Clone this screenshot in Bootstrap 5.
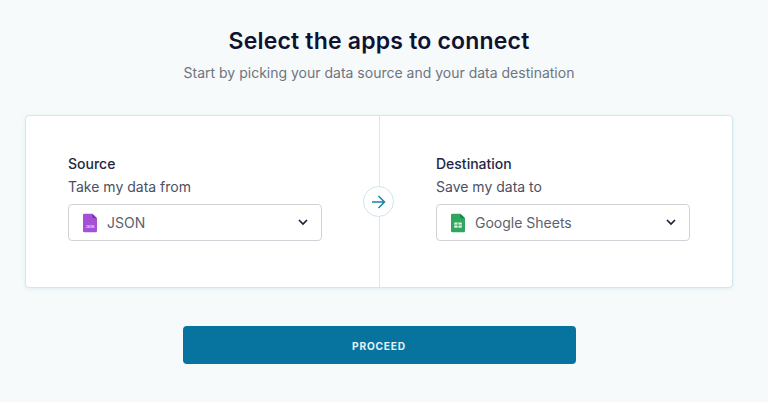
<!DOCTYPE html>
<html lang="en">
<head>
  <meta charset="UTF-8" />
  <title>Select the apps to connect</title>
  <meta name="viewport" content="width=device-width, initial-scale=1.0">
  <link href="https://cdn.jsdelivr.net/npm/bootstrap@5.3.0/dist/css/bootstrap.min.css" rel="stylesheet" />
  <style>
    html, body { height: 100%; overflow: hidden; }
    body {
      background-color: #f6fafb;
      font-family: "Inter", "Liberation Sans", sans-serif;
      color: #1c2238;
    }
    .page-wrap { padding: 27px 35px 0 25px; }
    .page-title {
      font-family: "Inter", sans-serif;
      font-size: 23px;
      font-weight: 600;
      line-height: 28px;
      color: #0f1230;
      margin: 0 0 8px;
      text-align: center;
      letter-spacing: .2px;
    }
    .page-sub {
      font-size: 14px;
      line-height: 20px;
      color: #6f747f;
      margin: 0 0 32px;
      text-align: center;
    }
    .connect-box {
      background: #fff;
      border: 1px solid #d3e7ee;
      border-radius: 4px;
      height: 173px;
      box-shadow: 0 1px 4px rgba(120, 170, 190, .15);
    }
    .connect-pane { flex: 1 1 0; padding-top: 38px; }
    .connect-pane.from { padding-left: 42px; padding-right: 57px; border-right: 1px solid #d9e8ee; }
    .connect-pane.to { padding-left: 56px; padding-right: 42px; }
    .pane-label { font-size: 14px; font-weight: 500; line-height: 20px; color: #24283f; margin-bottom: 3px; }
    .pane-hint { font-size: 14px; line-height: 20px; color: #4b4f63; margin-bottom: 7px; }
    .app-select {
      height: 37px;
      border: 1px solid #cfd3d8;
      border-radius: 4px;
      padding: 0 13px 0 14px;
      background: #fff;
      color: #5b5f6e;
      font-size: 14px;
    }
    .arrow-dot {
      position: absolute;
      left: 337px;
      top: 70px;
      width: 31px;
      height: 31px;
      border-radius: 50%;
      background: #fff;
      border: 1px solid #cfe5ec;
    }
    .go-btn {
      display: block;
      width: 393px;
      height: 38px;
      margin: 38px auto 0;
      padding-top: 9px;
      background: #06749e;
      border: 0;
      border-radius: 4px;
      color: #e4f1f6;
      font-size: 10.2px;
      font-weight: 700;
      letter-spacing: .8px;
    }
    .app-name { margin-left: 2px; }
    .icon-tag { font-family: "Liberation Sans", sans-serif; font-size: 3.4px; font-weight: 700; fill: #ecd9f7; }
  </style>
</head>
<body>
  <div class="page-wrap">
    <h1 class="page-title">Select the apps to connect</h1>
    <p class="page-sub">Start by picking your data source and your data destination</p>

    <div class="connect-box d-flex position-relative">
      <div class="connect-pane from">
        <div class="pane-label">Source</div>
        <div class="pane-hint">Take my data from</div>
        <div class="app-select d-flex align-items-center gap-2">
          <svg width="14" height="20" viewBox="0 0 15 20" aria-hidden="true">
            <path d="M1.5 0H10l5 5v13.500a1.500 1.500 0 0 1-1.500 1.500h-12A1.500 1.500 0 0 1 0 18.500v-17A1.500 1.500 0 0 1 1.500 0z" fill="#a64fd8"/>
            <path d="M10 0l5 5h-3.500A1.500 1.500 0 0 1 10 3.500z" fill="#7c35ab"/>
            <text class="icon-tag" x="7.500" y="15.500" text-anchor="middle">JSON</text>
          </svg>
          <span class="flex-grow-1 app-name">JSON</span>
          <svg width="10" height="7" viewBox="0 0 10 7" aria-hidden="true">
            <path d="M1 1l4 4 4-4" fill="none" stroke="#1c2238" stroke-width="1.700"/>
          </svg>
        </div>
      </div>
      <div class="connect-pane to">
        <div class="pane-label">Destination</div>
        <div class="pane-hint">Save my data to</div>
        <div class="app-select d-flex align-items-center gap-2">
          <svg width="14" height="20" viewBox="0 0 15 20" aria-hidden="true">
            <path d="M1.500 0H10l5 5v13.500a1.500 1.500 0 0 1-1.500 1.500h-12A1.500 1.500 0 0 1 0 18.500v-17A1.500 1.500 0 0 1 1.500 0z" fill="#2fa75f"/>
            <path d="M10 0l5 5h-3.500A1.500 1.500 0 0 1 10 3.500z" fill="#1d7f44"/>
            <path d="M3.500 9.500h8v5.500h-8z" fill="#e6f5ec"/>
            <path d="M7.500 9.500v5.500M3.500 12.200h8" stroke="#2fa75f" stroke-width="1"/>
          </svg>
          <span class="flex-grow-1 app-name">Google Sheets</span>
          <svg width="10" height="7" viewBox="0 0 10 7" aria-hidden="true">
            <path d="M1 1l4 4 4-4" fill="none" stroke="#1c2238" stroke-width="1.700"/>
          </svg>
        </div>
      </div>
      <div class="arrow-dot d-flex align-items-center justify-content-center">
        <svg width="15" height="14" viewBox="0 0 15 14" aria-hidden="true">
          <path d="M1 7h12.500M7.500 1l6 6-6 6" fill="none" stroke="#1a82a8" stroke-width="1.500"/>
        </svg>
      </div>
    </div>

    <button type="button" class="btn go-btn">PROCEED</button>
  </div>
  <script src="https://cdn.jsdelivr.net/npm/bootstrap@5.3.0/dist/js/bootstrap.bundle.min.js"></script>
</body>
</html>
